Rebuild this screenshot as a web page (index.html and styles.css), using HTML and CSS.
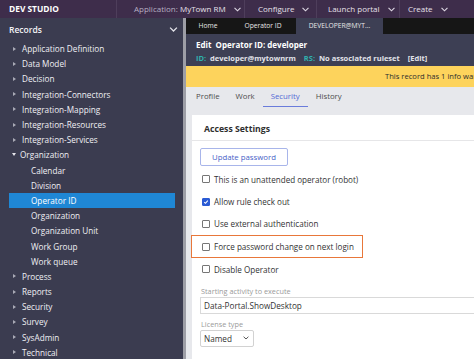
FILE: index.html
```html
<!DOCTYPE html>
<html lang="en">
<head>
<meta charset="utf-8">
<title>Dev Studio - Operator ID</title>
<link rel="stylesheet" href="styles.css">
</head>
<body>
<div class="app">
  <header class="topbar">
    <div class="brand">DEV STUDIO</div>
    <div class="menu m-app"><span class="muted">Application:</span>&nbsp;MyTown RM<svg class="chev" viewBox="0 0 8 5"><polyline points="0.6,0.6 4,4 7.4,0.6"/></svg></div>
    <div class="menu m-config">Configure<svg class="chev" viewBox="0 0 8 5"><polyline points="0.6,0.6 4,4 7.4,0.6"/></svg></div>
    <div class="menu m-launch">Launch portal<svg class="chev" viewBox="0 0 8 5"><polyline points="0.6,0.6 4,4 7.4,0.6"/></svg></div>
    <div class="menu m-create">Create<svg class="chev" viewBox="0 0 8 5"><polyline points="0.6,0.6 4,4 7.4,0.6"/></svg></div>
  </header>
  <div class="main">
    <aside class="sidebar">
      <div class="side-head">Records<svg class="chev side-chev" viewBox="0 0 8 5"><polyline points="0.6,0.6 4,4 7.4,0.6"/></svg></div>
      <ul class="tree">
        <li class="node"><span class="tri"></span>Application Definition</li>
        <li class="node"><span class="tri"></span>Data Model</li>
        <li class="node"><span class="tri"></span>Decision</li>
        <li class="node"><span class="tri"></span>Integration-Connectors</li>
        <li class="node"><span class="tri"></span>Integration-Mapping</li>
        <li class="node"><span class="tri"></span>Integration-Resources</li>
        <li class="node"><span class="tri"></span>Integration-Services</li>
        <li class="node"><span class="tri open"></span>Organization</li>
        <li class="leaf">Calendar</li>
        <li class="leaf">Division</li>
        <li class="leaf selected">Operator ID</li>
        <li class="leaf">Organization</li>
        <li class="leaf">Organization Unit</li>
        <li class="leaf">Work Group</li>
        <li class="leaf">Work queue</li>
        <li class="node"><span class="tri"></span>Process</li>
        <li class="node"><span class="tri"></span>Reports</li>
        <li class="node"><span class="tri"></span>Security</li>
        <li class="node"><span class="tri"></span>Survey</li>
        <li class="node"><span class="tri"></span>SysAdmin</li>
        <li class="node"><span class="tri"></span>Technical</li>
      </ul>
    </aside>
    <div class="splitter"></div>
    <section class="content">
      <div class="doc-tabs">
        <div class="doc-tab t-home">Home</div>
        <div class="doc-tab t-op">Operator ID</div>
        <div class="doc-tab t-active">DEVELOPER@MYT...</div>
      </div>
      <div class="doc-head">
        <div class="doc-title">Edit&nbsp; Operator ID: developer</div>
        <div class="doc-meta"><span class="key">ID:</span>&nbsp; developer@mytownrm <span class="key k-rs">RS:</span>&nbsp; No associated ruleset <span class="edit">[Edit]</span></div>
      </div>
      <div class="banner">This record has 1 info warning</div>
      <div class="body">
        <nav class="tabs">
          <span class="tab">Profile</span>
          <span class="tab">Work</span>
          <span class="tab active">Security</span>
          <span class="tab">History</span>
        </nav>
        <div class="card">
          <div class="card-head">Access Settings</div>
          <div class="card-body">
            <button class="btn">Update password</button>
            <div class="row"><span class="cb"></span>This is an unattended operator (robot)</div>
            <div class="row"><span class="cb checked"><svg viewBox="0 0 8 8"><polyline points="1.6,4.2 3.3,5.8 6.4,2.2"/></svg></span>Allow rule check out</div>
            <div class="row"><span class="cb"></span>Use external authentication</div>
            <div class="row highlight"><span class="cb"></span>Force password change on next login</div>
            <div class="row"><span class="cb"></span>Disable Operator</div>
            <div class="label">Starting activity to execute</div>
            <div class="input">Data-Portal.ShowDesktop</div>
            <div class="label">License type</div>
            <div class="select">Named<svg class="sel-chev" viewBox="0 0 8 5"><polyline points="0.8,0.8 4,3.8 7.2,0.8"/></svg></div>
          </div>
        </div>
      </div>
    </section>
  </div>
</div>
</body>
</html>
```

FILE: styles.css
```css
* { box-sizing: border-box; }
html, body {
  margin: 0;
  padding: 0;
  width: 474px;
  height: 359px;
  overflow: hidden;
}
body {
  font-family: "Open Sans", "Noto Sans", "Liberation Sans", sans-serif;
  color: #333;
}
.app {
  display: flex;
  flex-direction: column;
  width: 474px;
  height: 359px;
}

/* top bar */
.topbar {
  display: flex;
  height: 18px;
  flex: none;
  background: #3e2d4b;
  color: #e6e1ea;
  font-size: 8px;
  line-height: 18px;
  white-space: nowrap;
}
.brand {
  width: 117px;
  padding-left: 9px;
  font-size: 8.4px;
  font-weight: 700;
  color: #fff;
  border-right: 1px solid #4e3e5b;
}
.menu {
  display: flex;
  align-items: center;
  border-right: 1px solid #4e3e5b;
}
.menu .chev { margin-left: 8px; }
.m-app { width: 128px; padding-left: 17px; }
.m-config { width: 72px; padding-left: 13px; }
.m-launch { width: 83px; padding-left: 11px; }
.m-create { width: 74px; padding-left: 8px; border-right: 0; }
.muted { color: #b7adc2; }
.chev {
  width: 7px;
  height: 5px;
  fill: none;
  stroke: #ddd6e3;
  stroke-width: 1.3;
  flex: none;
}

/* main */
.main {
  display: flex;
  flex: 1;
  min-height: 0;
}
.sidebar {
  width: 183px;
  flex: none;
  background: #3b3c50;
  color: #f0f0f4;
}
.side-head {
  display: flex;
  align-items: center;
  height: 23px;
  padding: 0 5px 0 9px;
  font-size: 8.5px;
  font-weight: 600;
  color: #f4f4f7;
}
.side-chev {
  margin-left: auto;
  width: 9px;
  height: 5px;
  stroke: #e4e4ea;
}
.tree {
  list-style: none;
  margin: 0;
  padding: 0 8px 0 9px;
  font-size: 8.2px;
}
.tree li {
  display: flex;
  align-items: center;
  height: 15.2px;
  white-space: nowrap;
}
.node { padding-left: 3px; }
.leaf { padding-left: 22px; }
.selected {
  background: #1f87d5;
  color: #fff;
}
.tri {
  width: 0;
  height: 0;
  border-top: 2.5px solid transparent;
  border-bottom: 2.5px solid transparent;
  border-left: 3px solid #a9aab6;
  margin-right: 6px;
  margin-left: 1px;
}
.tri.open {
  border-left: 2.8px solid transparent;
  border-right: 2.8px solid transparent;
  border-top: 3.2px solid #e6e6ec;
  border-bottom: 0;
  margin-left: 0;
  margin-right: 4px;
}
.splitter {
  width: 3px;
  flex: none;
  background: #9d9ea6;
}

/* content */
.content {
  flex: 1;
  min-width: 0;
  display: flex;
  flex-direction: column;
  background: #e7e8ec;
  overflow: hidden;
}
.doc-tabs {
  display: flex;
  height: 16px;
  flex: none;
  background: #161616;
  font-size: 6.7px;
  line-height: 16px;
  color: #e8e8e8;
  white-space: nowrap;
}
.doc-tab { text-align: center; }
.t-home { width: 44px; }
.t-op { width: 66px; }
.t-active {
  width: 87px;
  background: #3d3f54;
}
.doc-head {
  height: 32px;
  flex: none;
  background: #3d3f54;
  padding: 4px 10px 0;
  color: #fff;
  white-space: nowrap;
}
.doc-title {
  font-size: 8px;
  font-weight: 700;
  line-height: 13px;
}
.doc-meta {
  font-size: 7.5px;
  font-weight: 700;
  line-height: 12px;
  margin-top: 1px;
  color: #e2e3ea;
}
.key { color: #2fb0ae; }
.k-rs { margin-left: 6px; }
.edit { margin-left: 6px; }
.banner {
  height: 21px;
  flex: none;
  background: #fdd35c;
  font-size: 7.6px;
  line-height: 21px;
  padding-left: 199px;
  white-space: nowrap;
  overflow: hidden;
  color: #2d2d2d;
}
.body {
  flex: 1;
  display: flex;
  flex-direction: column;
  padding-left: 6px;
}
.tabs {
  display: flex;
  height: 28px;
  flex: none;
  margin-left: -4px;
  padding-top: 2px;
  font-size: 7.8px;
  color: #4d4d4d;
}
.tab {
  padding: 0 8px;
  height: 18px;
  line-height: 14px;
  white-space: nowrap;
}
.tab.active {
  color: #5468d6;
  border-bottom: 1.5px solid #6a7cdb;
}
.card {
  flex: 1;
  background: #fff;
}
.card-head {
  height: 26px;
  line-height: 28px;
  padding-left: 12px;
  font-size: 8.7px;
  font-weight: 700;
  color: #2f2f2f;
  border-bottom: 1px solid #e6e6e8;
}
.card-body {
  padding: 7px 0 0 8px;
  display: flex;
  flex-direction: column;
  align-items: flex-start;
}
.btn {
  width: 88px;
  height: 18px;
  padding: 0;
  margin-bottom: 2px;
  font-family: inherit;
  font-size: 7.8px;
  color: #4762c7;
  background: #fff;
  border: 1px solid #a8b5ea;
  border-radius: 2px;
}
.row {
  display: flex;
  align-items: center;
  height: 22.4px;
  padding-left: 2px;
  font-size: 8.1px;
  color: #333;
  white-space: nowrap;
}
.cb {
  width: 8px;
  height: 8px;
  border: 1px solid #767676;
  border-radius: 1px;
  margin-right: 4px;
  flex: none;
  display: flex;
}
.cb.checked {
  background: #2b5bd4;
  border-color: #2b5bd4;
}
.cb svg {
  width: 100%;
  height: 100%;
  fill: none;
  stroke: #fff;
  stroke-width: 1.4;
}
.row.highlight {
  margin-left: -9px;
  padding-left: 10px;
  width: 172px;
  height: 23px;
  border: 1.5px solid #e8773a;
}
.label {
  margin-top: 5px;
  height: 11px;
  line-height: 11px;
  font-size: 7.3px;
  color: #9a9a9a;
  padding-left: 1px;
}
.input {
  align-self: stretch;
  height: 17px;
  line-height: 15px;
  padding-left: 3px;
  border: 1px solid #d9d9d9;
  border-right: 0;
  font-size: 8.2px;
  color: #333;
}
.select {
  display: flex;
  align-items: center;
  width: 54px;
  height: 17px;
  padding: 0 4px 0 3px;
  border: 1px solid #d2d2d2;
  border-radius: 2px;
  font-size: 8.2px;
  color: #333;
}
.sel-chev {
  margin-left: auto;
  width: 6px;
  height: 4px;
  fill: none;
  stroke: #555;
  stroke-width: 1.3;
}
```
